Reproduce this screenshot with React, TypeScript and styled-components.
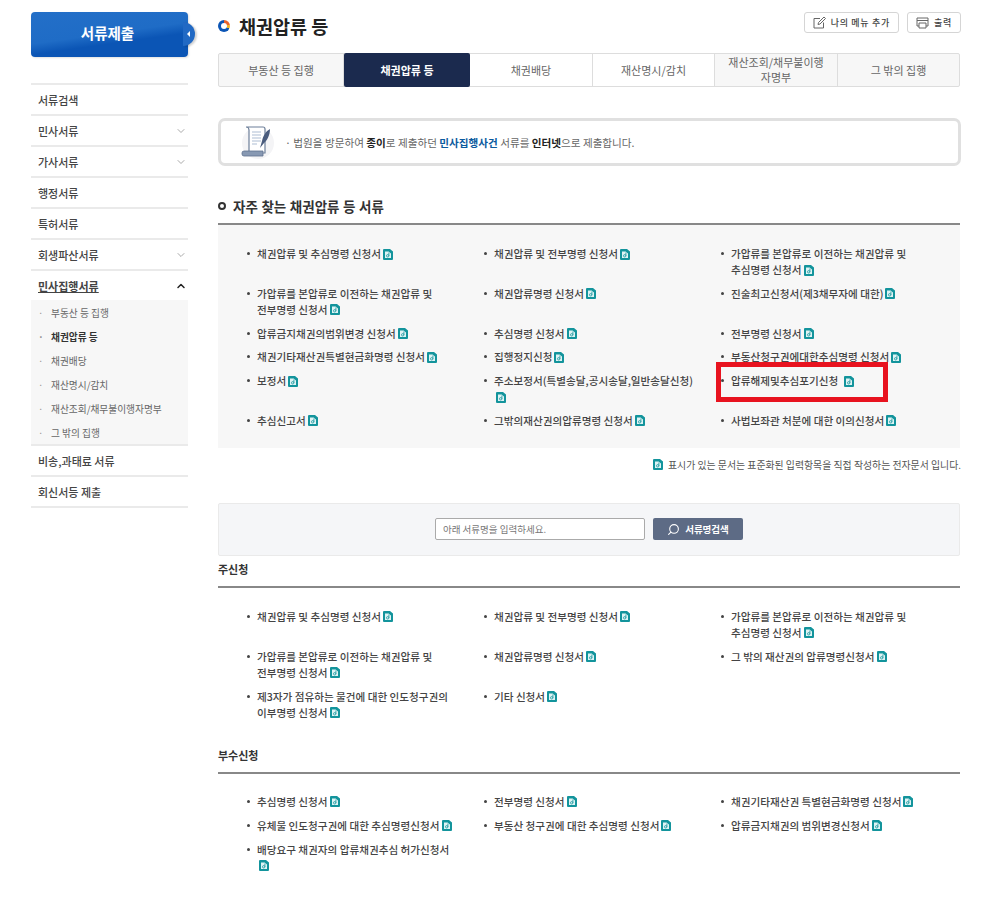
import React from 'react';
import styled, { createGlobalStyle } from 'styled-components';
import { ChevronDown, ChevronUp, Search } from 'lucide-react';

const GlobalStyle = createGlobalStyle`
  html, body {
    margin: 0;
    padding: 0;
    background: #fff;
  }
  body {
    font-family: 'Noto Sans CJK KR', 'Noto Sans', sans-serif;
    color: #333;
  }
  * {
    box-sizing: border-box;
  }
`;

const Page = styled.div`
  position: relative;
  width: 983px;
  height: 898px;
  overflow: hidden;
  display: flex;
  padding: 12px 0 0 31px;
`;

const Sidebar = styled.aside`
  width: 157px;
  flex: none;
  margin-right: 30px;
`;

const SubmitButton = styled.div`
  position: relative;
  height: 45px;
  padding-right: 4px;
  border-radius: 4px;
  background: linear-gradient(172deg, #236fc8 0%, #1f6cc6 48%, #0b55b5 64%, #0b55b5 100%);
  box-shadow: 1px 1px 2px rgba(0, 0, 0, 0.12);
  color: #fff;
  font-size: 14.500px;
  font-weight: 700;
  line-height: 42px;
  text-align: center;

  &::after {
    content: '';
    position: absolute;
    right: -7px;
    top: 10px;
    width: 12px;
    height: 24px;
    border-radius: 0 12px 12px 0;
    background: #2169c4;
    box-shadow: 2px 1px 2px rgba(0, 0, 0, 0.18);
  }
  &::before {
    content: '';
    position: absolute;
    z-index: 1;
    right: -2px;
    top: 19px;
    border: 3px solid transparent;
    border-right: 3px solid #fff;
    border-left: 0;
  }
`;

const Nav = styled.nav`
  margin-top: 26px;
`;

const NavItem = styled.div<{ $active?: boolean }>`
  display: flex;
  align-items: center;
  justify-content: space-between;
  height: 31px;
  padding: 0 1px 0 7px;
  border-top: 2px solid #eaeaea;
  font-size: 11px;
  font-weight: ${(p) => (p.$active ? 700 : 500)};
  color: #444;
  text-decoration: ${(p) => (p.$active ? 'underline' : 'none')};
  svg {
    color: ${(p) => (p.$active ? '#222' : '#aaa')};
  }
`;

const SubMenu = styled.ul`
  list-style: none;
  margin: 0;
  padding: 1px 0 0 7px;
  height: 144px;
  background: #f7f7f7;
`;

const SubItem = styled.li<{ $active?: boolean }>`
  height: 24px;
  font-size: 9.7px;
  line-height: 24px;
  font-weight: ${(p) => (p.$active ? 700 : 400)};
  color: ${(p) => (p.$active ? '#333' : '#666')};
  &::before {
    content: '·';
    display: inline-block;
    width: 13px;
    color: #888;
  }
`;

const NavEnd = styled.div`
  border-top: 2px solid #eaeaea;
`;

const Main = styled.main`
  width: 743px;
  flex: none;
`;

const TitleRow = styled.header`
  display: flex;
  align-items: flex-start;
  justify-content: space-between;
  height: 29px;
`;

const Title = styled.h1`
  display: flex;
  align-items: center;
  gap: 9px;
  height: 27px;
  margin: 0;
  font-size: 18.5px;
  font-weight: 700;
  color: #222;
`;

const TitleDot = styled.span`
  position: relative;
  width: 12px;
  height: 12px;
  border-radius: 50%;
  background: conic-gradient(#e8632c 0 22%, #f0b429 22% 32%, #0b55b5 32% 100%);
  &::after {
    content: '';
    position: absolute;
    inset: 3px;
    border-radius: 50%;
    background: #fff;
  }
`;

const TitleActions = styled.div`
  display: flex;
  gap: 8px;
`;

const ActionButton = styled.button`
  display: flex;
  align-items: center;
  gap: 5px;
  height: 21px;
  padding: 0 8px;
  background: #fff;
  border: 1px solid #d5d5d5;
  border-radius: 3px;
  font-family: inherit;
  font-size: 9px;
  letter-spacing: 0.7px;
  font-weight: 500;
  color: #444;
`;

const Tabs = styled.div`
  display: grid;
  grid-template-columns: 125px 126px 123px 122px 123px 121px;
  width: 742px;
  height: 34px;
  margin-top: 12px;
  background: #f7f7f7;
  border: 1px solid #ddd;
  border-radius: 2px;
`;

const Tab = styled.div<{ $active?: boolean; $open?: boolean }>`
  display: flex;
  align-items: center;
  justify-content: center;
  padding: 0 10px;
  text-align: center;
  font-size: 11px;
  line-height: 15px;
  margin: ${(p) => (p.$active ? '-1px 0' : 0)};
  border-radius: ${(p) => (p.$active ? '2px' : 0)};
  font-weight: ${(p) => (p.$active ? 700 : 400)};
  color: ${(p) => (p.$active ? '#fff' : '#666')};
  background: ${(p) => (p.$active ? '#1b2a4e' : p.$open ? '#fff' : 'transparent')};
  border-right: ${(p) => (p.$active ? 0 : '1px solid #ddd')};
  &:last-child {
    border-right: 0;
  }
`;

const InfoBox = styled.div`
  display: flex;
  align-items: center;
  gap: 8px;
  height: 48px;
  margin-top: 31px;
  padding-left: 16px;
  border: 3px solid #e0e0e0;
  border-radius: 7px;
  font-size: 10.6px;
  color: #666;
  b {
    color: #222;
  }
  em {
    font-style: normal;
    font-weight: 700;
    color: #0b5a9e;
  }
`;

const SectionHead = styled.h2`
  display: flex;
  align-items: center;
  gap: 7px;
  width: 742px;
  height: 35px;
  margin: 24px 0 0;
  font-size: 13.5px;
  word-spacing: 0.5px;
  font-weight: 700;
  color: #333;
  border-bottom: 2px solid #888;
  padding-bottom: 1px;
  &::before {
    content: '';
    width: 4px;
    height: 4px;
    border: 2px solid #333;
    border-radius: 50%;
  }
`;

const DocGrid = styled.ul<{ $shaded?: boolean; $top?: number }>`
  display: grid;
  grid-template-columns: repeat(3, 237px);
  gap: ${(p) => (p.$shaded ? '7.8px' : '8px')} 0;
  width: 742px;
  list-style: none;
  margin: 0;
  padding: ${(p) => (p.$shaded ? '21px 0 19px 27px' : `${p.$top ?? 21}px 0 0 27px`)};
  background: ${(p) => (p.$shaded ? '#f7f7f7' : 'transparent')};
`;

const DocItem = styled.li`
  position: relative;
  padding: 0 25px 0 12px;
  font-size: 10.6px;
  font-weight: 500;
  line-height: 16px;
  word-break: keep-all;
  color: #444;
  &::before {
    content: '';
    position: absolute;
    left: 2px;
    top: 6px;
    width: 3px;
    height: 3px;
    border-radius: 50%;
    background: #444;
  }
`;

const IconSvg = styled.svg<{ $gap?: number }>`
  display: inline-block;
  vertical-align: -1.5px;
  margin-left: ${(p) => p.$gap ?? 2}px;
`;

const RedMark = styled.span`
  position: absolute;
  left: -3px;
  top: -11px;
  width: 172px;
  height: 40px;
  border: 5px solid #e8131f;
`;

const Note = styled.p`
  display: flex;
  justify-content: flex-end;
  align-items: center;
  gap: 5px;
  width: 743px;
  margin: 10px 0 0;
  height: 14px;
  font-size: 9.9px;
  color: #555;
`;

const SearchBox = styled.div`
  display: flex;
  justify-content: center;
  align-items: center;
  gap: 8px;
  width: 742px;
  height: 53px;
  margin-top: 31px;
  background: #f5f6f8;
  border: 1px solid #eaeaea;
  border-radius: 2px;
`;

const SearchInput = styled.input`
  width: 210px;
  height: 22px;
  padding: 0 7px;
  border: 1px solid #aaa;
  border-radius: 2px;
  font-family: inherit;
  font-size: 9.5px;
  &::placeholder {
    color: #777;
  }
`;

const SearchButton = styled.button`
  display: flex;
  align-items: center;
  justify-content: center;
  gap: 5px;
  width: 90px;
  height: 22px;
  background: #5d6b85;
  border: 0;
  border-radius: 2px;
  color: #fff;
  font-family: inherit;
  font-size: 9.5px;
  font-weight: 700;
`;

const SearchGlyph = styled(Search)`
  transform: scaleX(-1);
`;

const GroupHead = styled.h3<{ $top: number }>`
  display: flex;
  align-items: center;
  width: 742px;
  height: 32px;
  margin: ${(p) => p.$top}px 0 0;
  font-size: 11px;
  font-weight: 700;
  color: #333;
  border-bottom: 2px solid #888;
  padding-bottom: 3px;
`;

const DocIcon = ({ gap }: { gap?: number }) => (
  <IconSvg $gap={gap} width="10" height="11" viewBox="0 0 10 11">
    <path d="M1 0h6l3 2.500V10a1 1 0 0 1-1 1H1a1 1 0 0 1-1-1V1a1 1 0 0 1 1-1z" fill="#13949c" />
    <path d="M2 2.500h3.600L8 4.500V9H2z" fill="#dff3f4" />
    <path d="M3.500 6.800a1.200 1.200 0 1 0 2.400 0 1.200 1.200 0 1 0-2.400 0M5.900 3.500v3.300" fill="none" stroke="#13949c" strokeWidth="0.8" />
  </IconSvg>
);

const ScrollIcon = () => (
  <svg width="40" height="36" viewBox="0 0 40 36">
    <circle cx="21" cy="19" r="16" fill="#f4f4f6" />
    <path d="M9 3h17a2 2 0 0 1 2 2v24H12V6a3 3 0 0 0-3-3z" fill="#fff" stroke="#6d7f99" strokeWidth="1.2" />
    <path d="M15 8h9M15 11h9M15 14h9M15 17h9M15 20h5" stroke="#c9d3e2" strokeWidth="1.3" />
    <path d="M5 29a2 2 0 0 1 2-2h19v5H7a2 2 0 0 1-2-2z" fill="#8899b3" stroke="#5f7290" strokeWidth="0.8" />
    <path d="M33 5c-4 2-7 7-8 12l-2 7 4-5c3-2 6-8 6-14z" fill="#4a5c7d" />
  </svg>
);

const EditIcon = () => (
  <svg width="13" height="13" viewBox="0 0 13 13" fill="none" stroke="#666" strokeWidth="1">
    <path d="M10.500 6.500v5.500h-9.500V2.500h6" />
    <path d="M5 8.500l.5-2L11 1l1.500 1.500L7 8z" />
  </svg>
);

const PrintIcon = () => (
  <svg width="13" height="12" viewBox="0 0 13 12" fill="none" stroke="#666" strokeWidth="1">
    <path d="M3 9H1V1h11v8h-2" />
    <path d="M1 3.500h11M3 6h7v5H3z" />
  </svg>
);

const sidebarTop = [
  { label: '서류검색' },
  { label: '민사서류', more: true },
  { label: '가사서류', more: true },
  { label: '행정서류' },
  { label: '특허서류' },
  { label: '회생파산서류', more: true },
];

const subMenu = ['부동산 등 집행', '채권압류 등', '채권배당', '재산명시/감치', '재산조회/채무불이행자명부', '그 밖의 집행'];

const tabs = ['부동산 등 집행', '채권압류 등', '채권배당', '재산명시/감치', '재산조회/채무불이행자명부', '그 밖의 집행'];

const frequent = [
  '채권압류 및 추심명령 신청서',
  '채권압류 및 전부명령 신청서',
  '가압류를 본압류로 이전하는 채권압류 및 추심명령 신청서',
  '가압류를 본압류로 이전하는 채권압류 및 전부명령 신청서',
  '채권압류명령 신청서',
  '진술최고신청서(제3채무자에 대한)',
  '압류금지채권의범위변경 신청서',
  '추심명령 신청서',
  '전부명령 신청서',
  '채권기타재산권특별현금화명령 신청서',
  '집행정지신청',
  '부동산청구권에대한추심명령 신청서',
  '보정서',
  '주소보정서(특별송달,공시송달,일반송달신청)',
  '압류해제및추심포기신청',
  '추심신고서',
  '그밖의재산권의압류명령 신청서',
  '사법보좌관 처분에 대한 이의신청서',
];

const mainDocs = [
  '채권압류 및 추심명령 신청서',
  '채권압류 및 전부명령 신청서',
  '가압류를 본압류로 이전하는 채권압류 및 추심명령 신청서',
  '가압류를 본압류로 이전하는 채권압류 및 전부명령 신청서',
  '채권압류명령 신청서',
  '그 밖의 재산권의 압류명령신청서',
  '제3자가 점유하는 물건에 대한 인도청구권의 이부명령 신청서',
  '기타 신청서',
];

const subDocs = [
  '추심명령 신청서',
  '전부명령 신청서',
  '채권기타재산권 특별현금화명령 신청서',
  '유체물 인도청구권에 대한 추심명령신청서',
  '부동산 청구권에 대한 추심명령 신청서',
  '압류금지채권의 범위변경신청서',
  '배당요구 채권자의 압류채권추심 허가신청서',
];

const MARKED = '압류해제및추심포기신청';

const App = () => {
  return (
    <Page>
      <GlobalStyle />
      <Sidebar>
        <SubmitButton>서류제출</SubmitButton>
        <Nav>
          {sidebarTop.map((item) => (
            <NavItem key={item.label}>
              {item.label}
              {item.more && <ChevronDown size={12} />}
            </NavItem>
          ))}
          <NavItem $active>
            민사집행서류
            <ChevronUp size={12} strokeWidth={3} />
          </NavItem>
          <SubMenu>
            {subMenu.map((label) => (
              <SubItem key={label} $active={label === '채권압류 등'}>
                {label}
              </SubItem>
            ))}
          </SubMenu>
          <NavItem>비송,과태료 서류</NavItem>
          <NavItem>회신서등 제출</NavItem>
          <NavEnd />
        </Nav>
      </Sidebar>
      <Main>
        <TitleRow>
          <Title>
            <TitleDot />
            채권압류 등
          </Title>
          <TitleActions>
            <ActionButton>
              <EditIcon />
              나의 메뉴 추가
            </ActionButton>
            <ActionButton>
              <PrintIcon />
              출력
            </ActionButton>
          </TitleActions>
        </TitleRow>
        <Tabs>
          {tabs.map((label, i) => (
            <Tab key={label} $active={i === 1} $open={i === 2 || i === 3}>
              {label}
            </Tab>
          ))}
        </Tabs>
        <InfoBox>
          <ScrollIcon />
          <span>
            · 법원을 방문하여 <b>종이</b>로 제출하던 <em>민사집행사건</em> 서류를 <b>인터넷</b>으로 제출합니다.
          </span>
        </InfoBox>
        <SectionHead>자주 찾는 채권압류 등 서류</SectionHead>
        <DocGrid $shaded>
          {frequent.map((label) => (
            <DocItem key={label}>
              {label}
              <DocIcon gap={label === MARKED ? 6 : 2} />
              {label === MARKED && <RedMark />}
            </DocItem>
          ))}
        </DocGrid>
        <Note>
          <DocIcon />
          표시가 있는 문서는 표준화된 입력항목을 직접 작성하는 전자문서 입니다.
        </Note>
        <SearchBox>
          <SearchInput placeholder="아래 서류명을 입력하세요." />
          <SearchButton>
            <SearchGlyph size={13} />
            서류명검색
          </SearchButton>
        </SearchBox>
        <GroupHead $top={0}>주신청</GroupHead>
        <DocGrid>
          {mainDocs.map((label) => (
            <DocItem key={label}>
              {label}
              <DocIcon />
            </DocItem>
          ))}
        </DocGrid>
        <GroupHead $top={21}>부수신청</GroupHead>
        <DocGrid $top={20}>
          {subDocs.map((label) => (
            <DocItem key={label}>
              {label}
              <DocIcon />
            </DocItem>
          ))}
        </DocGrid>
      </Main>
    </Page>
  );
};

export default App;
